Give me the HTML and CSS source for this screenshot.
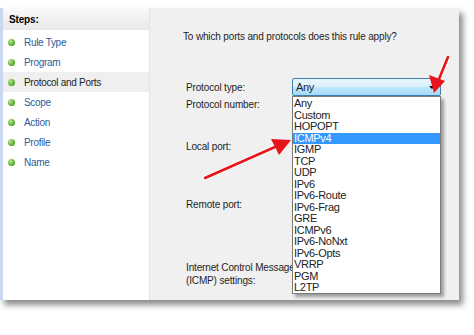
FILE: index.html
```html
<!DOCTYPE html>
<html lang="en">
<head>
    <meta charset="UTF-8">
    <title>Protocol and Ports</title>
    <link rel="stylesheet" href="styles.css">
</head>
<body>
    <div class="window">
        <div class="steps">
            <div class="steps-head">Steps:</div>
            <div class="step"><span class="dot"></span>Rule Type</div>
            <div class="step"><span class="dot"></span>Program</div>
            <div class="step current"><span class="dot"></span>Protocol and Ports</div>
            <div class="step"><span class="dot"></span>Scope</div>
            <div class="step"><span class="dot"></span>Action</div>
            <div class="step"><span class="dot"></span>Profile</div>
            <div class="step"><span class="dot"></span>Name</div>
        </div>
        <div class="main">
            <p class="question">To which ports and protocols does this rule apply?</p>
            <div class="form">
                <div class="row r-type">
                    <label>Protocol type:</label>
                    <div class="select">
                        <span>Any</span>
                        <span class="caret"></span>
                        <ul class="options">
                            <li>Any</li>
                            <li>Custom</li>
                            <li>HOPOPT</li>
                            <li class="sel">ICMPv4</li>
                            <li>IGMP</li>
                            <li>TCP</li>
                            <li>UDP</li>
                            <li>IPv6</li>
                            <li>IPv6-Route</li>
                            <li>IPv6-Frag</li>
                            <li>GRE</li>
                            <li>ICMPv6</li>
                            <li>IPv6-NoNxt</li>
                            <li>IPv6-Opts</li>
                            <li>VRRP</li>
                            <li>PGM</li>
                            <li>L2TP</li>
                        </ul>
                    </div>
                </div>
                <div class="row r-number"><label>Protocol number:</label></div>
                <div class="row r-local"><label>Local port:</label></div>
                <div class="row r-remote"><label>Remote port:</label></div>
                <div class="row r-icmp"><label>Internet Control Message<br>(ICMP) settings:</label></div>
            </div>
        </div>
    </div>

    <!-- red callout arrows drawn over the screenshot -->
    <svg class="arrows" width="474" height="335" viewBox="0 0 474 335">
        <g stroke="#fff" stroke-width="5" stroke-linecap="round" opacity=".7">
            <line x1="448" y1="57" x2="439" y2="79"/>
            <line x1="205" y1="178" x2="275" y2="147"/>
        </g>
        <g stroke="#e8141b" stroke-width="2.6" stroke-linecap="round">
            <line x1="448" y1="57" x2="439" y2="79"/>
            <line x1="205" y1="178" x2="275" y2="147"/>
        </g>
        <polygon points="434,93 429,75 445,81" fill="#e8141b"/>
        <polygon points="291,140 271,139 279,155" fill="#e8141b"/>
    </svg>
</body>
</html>
```

FILE: styles.css
```css
*{
    margin: 0;
    padding: 0;
    box-sizing: border-box;
}
body{
    width: 474px;
    height: 335px;
    background: #fff;
    font-family: 'Liberation Sans', Arial, sans-serif;
    font-size: 10px;
    letter-spacing: -0.15px;
    color: #1e1e1e;
    position: relative;
    overflow: hidden;
}
.window{
    display: flex;
    margin-top: 8px;
    width: 459px;
    height: 292px;
    box-shadow: 4px 5px 6px rgba(0,0,0,.45);
}
.steps{
    width: 150px;
    background: #fff;
    border-left: 3px solid #c9d8f0;
    border-right: 1px solid #e4e4e4;
}
.steps-head{
    height: 22px;
    padding: 6px 0 0 6px;
    font-weight: bold;
    color: #000;
    background: linear-gradient(#fafafa, #e9e9e9);
    border-bottom: 1px solid #e6e6e6;
    margin-bottom: 2px;
}
.step{
    display: flex;
    align-items: center;
    height: 20px;
    padding-left: 5px;
    color: #2e5c9a;
    letter-spacing: -0.3px;
}
.step.current{
    background: #efefef;
    color: #1e1e1e;
}
.dot{
    width: 7px;
    height: 7px;
    margin-right: 9px;
    border-radius: 50%;
    background: radial-gradient(circle at 35% 35%, #b8e58a, #4fa42a 70%);
}
.main{
    flex: 1;
    background: #f0f0f0;
    padding: 23px 0 0 33px;
}
.question{
    height: 47px;
}
.row{
    display: flex;
    align-items: center;
}
.row label{
    width: 109px;
    padding-left: 3px;
    line-height: 13px;
    white-space: nowrap;
}
.r-type{ height: 18px; }
.r-number{ height: 17px; }
.r-local{ height: 50px; padding-top: 16px; }
.r-remote{ height: 66px; padding-top: 16px; }
.r-icmp{ height: 78px; padding-top: 32px; align-items: flex-start; }
.select{
    position: relative;
    width: 149px;
    height: 18px;
    padding-left: 3px;
    display: flex;
    align-items: center;
    font-size: 11px;
    letter-spacing: -0.3px;
    border: 1px solid #3c7fb1;
    border-radius: 2px;
    background: linear-gradient(#eaf6fd, #d9f0fc 50%, #bee6fd 50%, #a7d9f5);
}
.caret{
    position: absolute;
    right: 5px;
    top: 7px;
    border: 3px solid transparent;
    border-top: 3px solid #000;
}
.options{
    position: absolute;
    left: -1px;
    top: 17px;
    width: 149px;
    height: 198px;
    list-style: none;
    background: #fff;
    border: 1px solid #7a7a7a;
    padding-top: 1px;
    box-shadow: 3px 3px 3px rgba(0,0,0,.35);
}
.options li{
    height: 11.5px;
    line-height: 11.5px;
    padding-left: 1px;
    color: #222;
}
.options li.sel{
    background: #3399ff;
    color: #fff;
}
.arrows{
    position: absolute;
    left: 0;
    top: 0;
}
```
